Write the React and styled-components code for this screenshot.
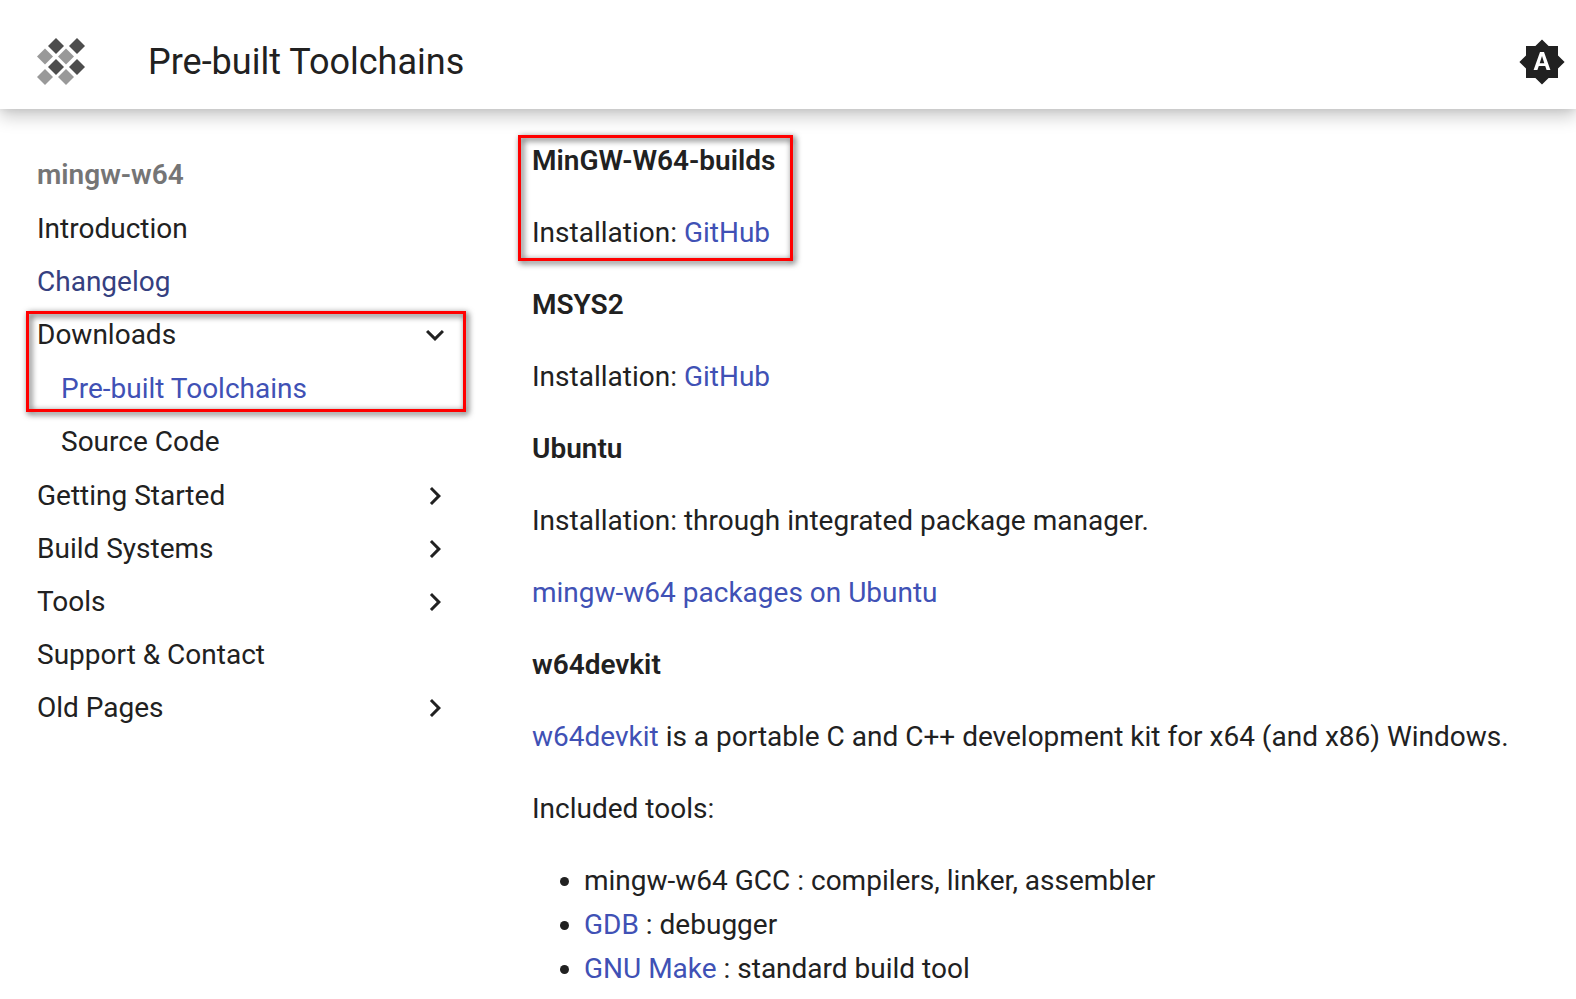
import React from "react";
import styled, { createGlobalStyle, css } from "styled-components";
import { MdBrightnessAuto, MdChevronRight } from "react-icons/md";

const GlobalStyle = createGlobalStyle`
  *, *::before, *::after { box-sizing: border-box; }
  body {
    margin: 0;
    background: #fff;
    color: #212121;
    font-family: Roboto, "Liberation Sans", sans-serif;
    font-size: 28px;
    font-weight: 400;
  }
`;

const Header = styled.header`
  display: flex;
  align-items: center;
  height: 109px;
  padding: 14px 10px 0 37px;
  background: #fff;
  box-shadow: 0 0 8px rgba(0, 0, 0, 0.1), 0 8px 16px rgba(0, 0, 0, 0.2);
`;

const LogoLink = styled.a`
  display: flex;
  margin-right: 63px;
`;

const Title = styled.h1`
  flex: 1;
  margin: 0;
  font-size: 36px;
  font-weight: 400;
  line-height: 48px;
`;

const PaletteButton = styled.button`
  display: flex;
  padding: 0;
  border: 0;
  background: none;
  color: inherit;
  cursor: pointer;
`;

const Layout = styled.div`
  display: grid;
  grid-template-columns: 453px minmax(0, 1fr);
  column-gap: 79px;
`;

const Sidebar = styled.nav`
  padding: 39px 0 0 37px;
`;

const navRow = css`
  display: flex;
  align-items: center;
  justify-content: space-between;
  width: 100%;
  height: 53px;
`;

const NavTitle = styled.h2`
  ${navRow}
  margin: 0 0 1px;
  font-size: 28px;
  font-weight: 600;
  color: #757575;
`;

const NavList = styled.ul`
  margin: 0;
  padding: ${(p) => (p.$nested ? "1px 0 1px 24px" : "0")};
  list-style: none;
`;

const NavItem = styled.li`
  position: relative;
`;

const linkColors = { plain: "#212121", visited: "#354080", active: "#4051b5" };

const NavLink = styled.a`
  ${navRow}
  color: ${(p) => linkColors[p.$tone || "plain"]};
  text-decoration: none;
`;

const NavToggle = styled.button`
  ${navRow}
  padding: 0;
  border: 0;
  background: none;
  color: inherit;
  font: inherit;
  text-align: left;
  cursor: pointer;
`;

const Chevron = styled(MdChevronRight)`
  flex: none;
  transform: ${(p) => (p.open ? "rotate(90deg)" : "none")};
`;

const Marker = styled.span`
  position: absolute;
  border: 3px solid #f00;
  filter: drop-shadow(2px 2px 3px rgba(0, 0, 0, 0.8));
  pointer-events: none;
`;

const NavMarker = styled(Marker)`
  top: 3px;
  left: -11px;
  right: -13px;
  height: 101px;
`;

const BuildMarker = styled(Marker)`
  top: -4px;
  left: -14px;
  right: -18px;
  bottom: -6px;
`;

const Content = styled.main`
  display: flex;
  flex-direction: column;
  align-items: flex-start;
  gap: 28px;
  padding: 30px 24px 0 0;
  line-height: 44px;
`;

const Section = styled.section`
  position: relative;
  display: flex;
  flex-direction: column;
  gap: 28px;
`;

const Name = styled.h3`
  margin: 0;
  font-size: 28px;
  font-weight: 600;
`;

const Text = styled.p`
  margin: 0;
`;

const Link = styled.a`
  color: #4051b5;
  text-decoration: none;
`;

const ToolList = styled.ul`
  margin: 0;
  padding-left: 52px;
`;

function Logo() {
  const tiles = [
    [19, 8, "#4d4d4d"], [40, 8, "#4d4d4d"],
    [8, 18.5, "#999"], [29, 18.5, "#999"],
    [19, 29, "#4d4d4d"], [40, 29, "#4d4d4d"],
    [8, 39, "#999"], [29, 39, "#999"],
  ];
  return (
    <svg width="48" height="48" viewBox="0 0 48 48" aria-hidden="true">
      {tiles.map(([x, y, fill]) => (
        <path key={`${x}-${y}`} d={`M${x} ${y - 8}l8 8-8 8-8-8z`} fill={fill} />
      ))}
    </svg>
  );
}

function NavGroup({ label, open, children }) {
  return (
    <NavItem>
      <NavToggle type="button" aria-expanded={!!open}>
        {label}
        <Chevron size={36} open={open} aria-hidden="true" />
      </NavToggle>
      {children}
    </NavItem>
  );
}

export default function App() {
  return (
    <>
      <GlobalStyle />
      <Header>
        <LogoLink href="#" aria-label="mingw-w64">
          <Logo />
        </LogoLink>
        <Title>Pre-built Toolchains</Title>
        <PaletteButton type="button" aria-label="Switch color scheme">
          <MdBrightnessAuto size={48} />
        </PaletteButton>
      </Header>
      <Layout>
        <Sidebar>
          <NavTitle>mingw-w64</NavTitle>
          <NavList>
            <NavItem><NavLink href="#">Introduction</NavLink></NavItem>
            <NavItem><NavLink href="#" $tone="visited">Changelog</NavLink></NavItem>
            <NavGroup label="Downloads" open>
              <NavList $nested>
                <NavItem><NavLink href="#" $tone="active">Pre-built Toolchains</NavLink></NavItem>
                <NavItem><NavLink href="#">Source Code</NavLink></NavItem>
              </NavList>
              <NavMarker />
            </NavGroup>
            <NavGroup label="Getting Started" />
            <NavGroup label="Build Systems" />
            <NavGroup label="Tools" />
            <NavItem><NavLink href="#">Support &amp; Contact</NavLink></NavItem>
            <NavGroup label="Old Pages" />
          </NavList>
        </Sidebar>
        <Content>
          <Section>
            <Name>MinGW-W64-builds</Name>
            <Text>Installation: <Link href="#">GitHub</Link></Text>
            <BuildMarker />
          </Section>
          <Section>
            <Name>MSYS2</Name>
            <Text>Installation: <Link href="#">GitHub</Link></Text>
          </Section>
          <Section>
            <Name>Ubuntu</Name>
            <Text>Installation: through integrated package manager.</Text>
            <Text><Link href="#">mingw-w64 packages on Ubuntu</Link></Text>
          </Section>
          <Section>
            <Name>w64devkit</Name>
            <Text>
              <Link href="#">w64devkit</Link> is a portable C and C++ development kit for x64 (and x86) Windows.
            </Text>
            <Text>Included tools:</Text>
            <ToolList>
              <li>mingw-w64 GCC : compilers, linker, assembler</li>
              <li><Link href="#">GDB</Link> : debugger</li>
              <li><Link href="#">GNU Make</Link> : standard build tool</li>
            </ToolList>
          </Section>
        </Content>
      </Layout>
    </>
  );
}
